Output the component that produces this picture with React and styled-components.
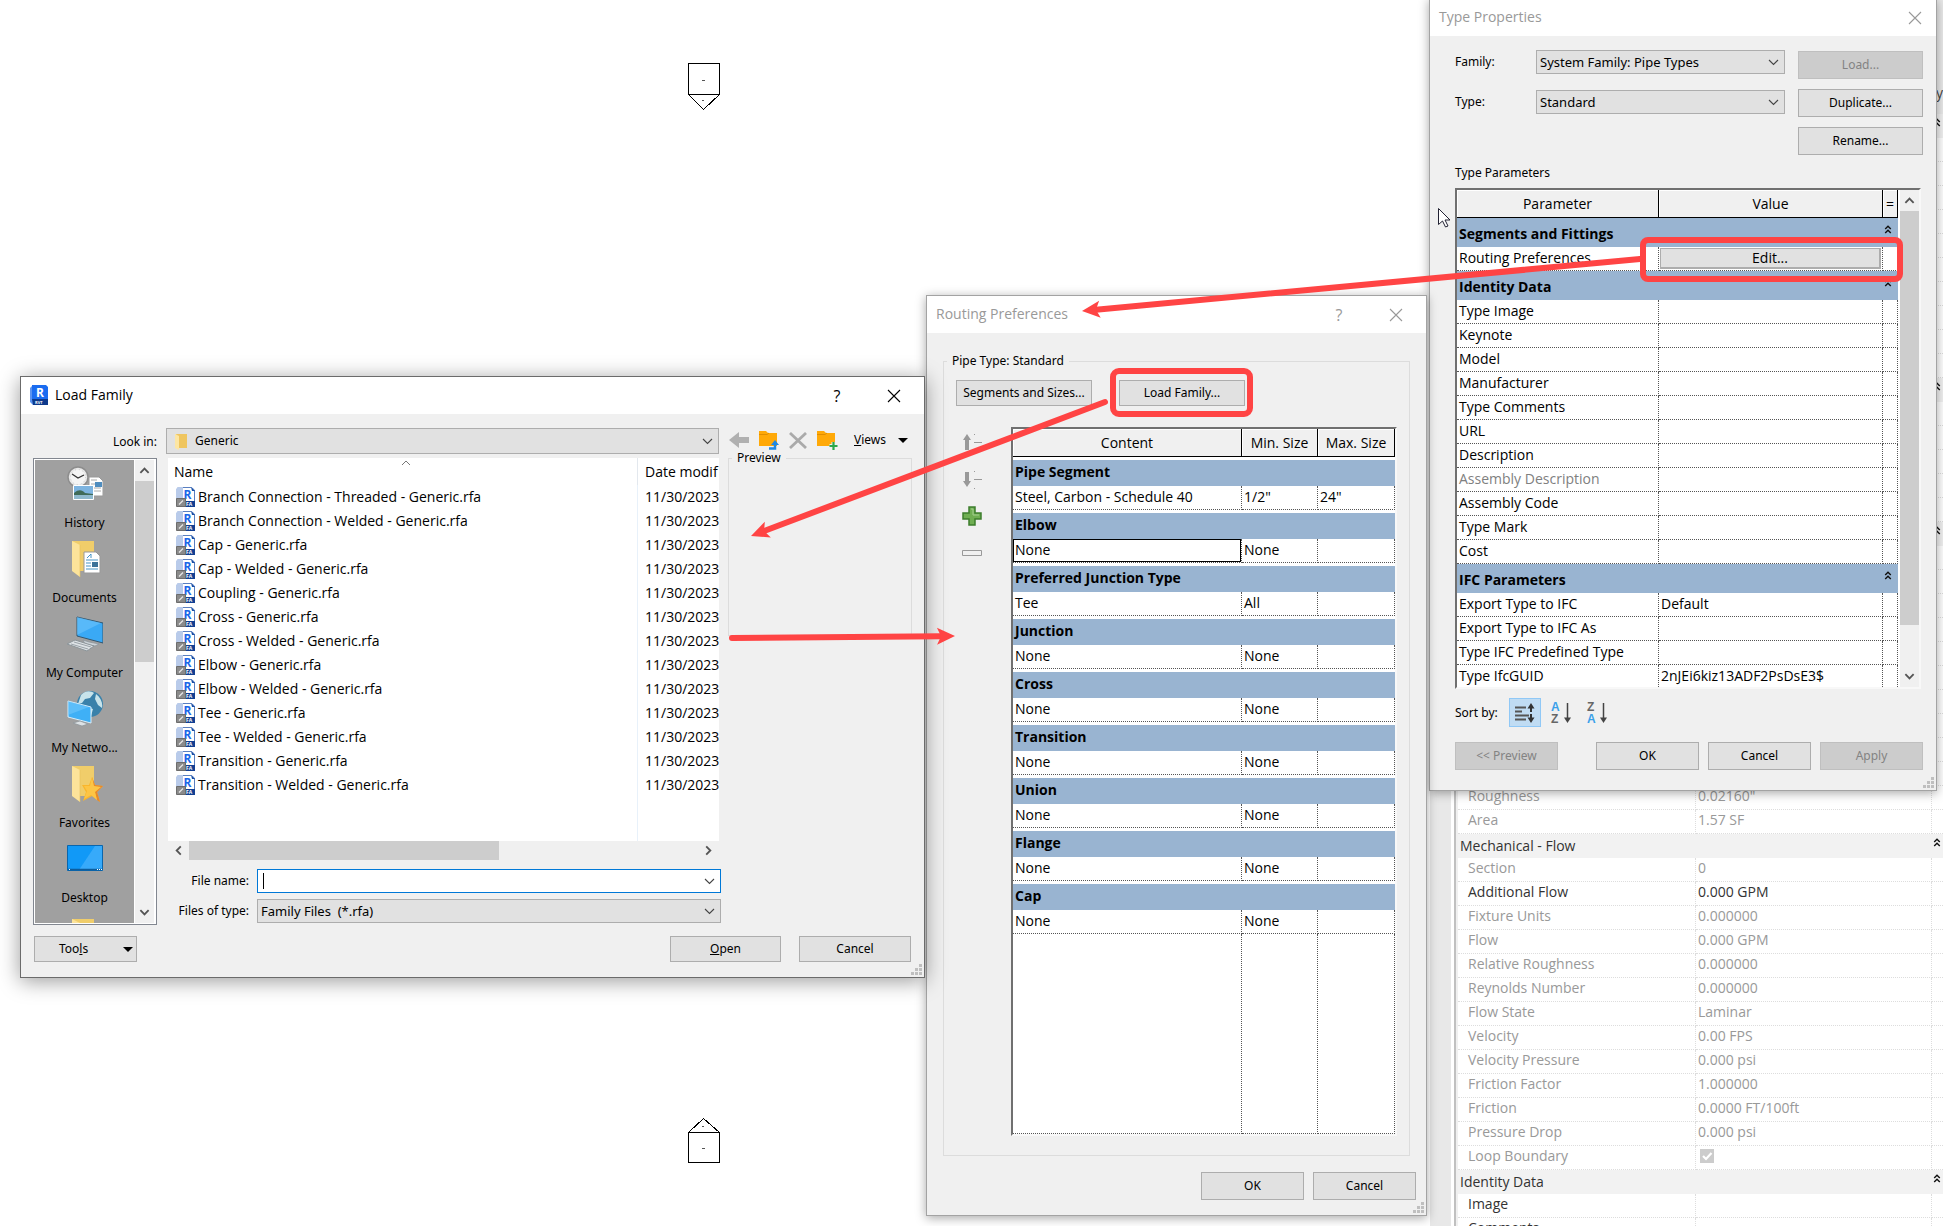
import React from "react";
import styled, { createGlobalStyle, css } from "styled-components";

const uiFont = `"Open Sans", "Noto Sans", sans-serif`;
const formFont = `"Noto Sans", "Open Sans", sans-serif`;

const GlobalStyle = createGlobalStyle`
  * {
    box-sizing: border-box;
  }

  body {
    margin: 0;
    background: #fff;
    color: #000;
    font: 14px/18px ${uiFont};
    overflow: hidden;
  }

  button, input, select {
    font: 12px/16px ${formFont};
    color: #000;
    margin: 0;
    padding: 0;
  }

  svg {
    display: block;
  }
`;

/* ---------- shared parts ---------- */

const Desktop = styled.div`
  position: relative;
  display: flex;
  height: 100vh;
  overflow: hidden;
`;

const Canvas = styled.main`
  flex: 1;
`;

const Window = styled.section`
  position: absolute;
  left: ${(p) => p.$x}px;
  top: ${(p) => p.$y}px;
  width: ${(p) => p.$w}px;
  background: #f0f0f0;
  border: 1px solid ${(p) => (p.$active ? "#6b6b6b" : "#a3a3a3")};
  box-shadow: ${(p) =>
    p.$active
      ? "0 3px 20px rgba(0, 0, 0, 0.4)"
      : "0 2px 10px rgba(0, 0, 0, 0.35)"};
`;

const TitleBar = styled.header`
  display: flex;
  align-items: center;
  gap: 6px;
  height: 37px;
  padding-left: 9px;
  background: #fff;
  color: ${(p) => (p.$active ? "#000" : "#999")};
`;

const Title = styled.h1`
  flex: 1;
  margin: 0;
  padding-bottom: 1px;
  font-size: 14px;
  font-weight: 400;
  line-height: 20px;
`;

const TitleActions = styled.div`
  display: flex;
`;

const TitleButton = styled.button`
  display: grid;
  place-items: center;
  width: ${(p) => p.$w}px;
  height: 36px;
  border: 0;
  background: transparent;
  color: inherit;
  font: 16px/20px ${uiFont};
`;

const Button = styled.button`
  width: ${(p) => p.$w}px;
  height: ${(p) => p.$h || 28}px;
  border: 1px solid #adadad;
  background: #e1e1e1;
  white-space: nowrap;

  &:disabled {
    border-color: #bfbfbf;
    background: #ccc;
    color: #838383;
  }
`;

const SelectBox = styled.div`
  display: grid;
  align-items: center;
  flex: 1;
  min-width: 0;
  height: ${(p) => p.$h || 24}px;
  border: 1px solid ${(p) => (p.$focus ? "#0078d7" : "#adadad")};
  background: ${(p) => (p.$focus ? "#fff" : "#e1e1e1")};

  > * {
    grid-area: 1 / 1;
  }

  > svg {
    pointer-events: none;
  }

  select,
  input {
    appearance: none;
    width: 100%;
    height: 100%;
    padding: 0 24px 0 ${(p) => p.$indent || 3}px;
    border: 0;
    outline: 0;
    border-radius: 0;
    background: transparent;
    font-size: ${(p) => (p.$indent ? 12 : 13)}px;
  }
`;

const DropIcon = styled.svg`
  justify-self: end;
  margin-right: 5px;
`;

const Caret = styled.span`
  width: 1px;
  height: 16px;
  margin-left: 5px;
  background: #000;
`;

const Group = styled.fieldset`
  min-width: 0;
  margin: 0;
  padding: 0 3px;
  border: 1px solid #dcdcdc;

  legend {
    padding: 0 5px;
    font: 12px/18px ${formFont};
  }
`;

const Grip = styled.svg`
  position: absolute;
  right: 2px;
  bottom: 2px;
`;

const ScrollBar = styled.div`
  display: flex;
  flex-direction: ${(p) => (p.$row ? "row" : "column")};
  flex: none;
  ${(p) => (p.$row ? "height" : "width")}: 19px;
  margin: ${(p) => (p.$row ? "0 2px" : "0")};
  background: #f0f0f0;
`;

const ScrollButton = styled.button`
  display: grid;
  place-items: center;
  flex: 0 0 21px;
  border: 0;
  background: transparent;
`;

const ScrollTrack = styled.div`
  display: flex;
  flex-direction: inherit;
  flex: 1;
`;

const ScrollThumb = styled.div`
  flex: 0 0 ${(p) => p.$size};
  background: #cdcdcd;
`;

const Sunken = styled.div`
  display: flex;
  flex: 1;
  border: 2px solid;
  border-color: #707070 #f8f8f8 #f8f8f8 #707070;
  background: #fff;
`;

const Grid = styled.table`
  width: 100%;
  table-layout: fixed;
  border-spacing: 0;
  line-height: 20px;

  th {
    height: 28px;
    padding: 0;
    border-right: 1px solid #000;
    border-bottom: 1px solid #000;
    background: #f0f0f0;
    box-shadow: inset 1px 1px #fff;
    font-weight: 400;
    text-align: center;
  }

  td {
    height: 24px;
    padding: 0 2px 2px;
    border-right: 1px dotted #555;
    border-bottom: 1px dotted #555;
    white-space: nowrap;
    overflow: hidden;
  }
`;

const MutedRow = styled.tr`
  color: ${(p) => (p.$muted ? "#808080" : "inherit")};
`;

const Chevron = ({ dir = "down", size = 11, width = 2 }) => {
  const turn = { down: 0, left: 90, up: 180, right: 270 }[dir];
  return (
    <svg width={size} height={size} viewBox="0 0 12 12" aria-hidden="true">
      <path
        d="M1.5 3.5 6 8l4.5-4.5"
        fill="none"
        stroke="#555"
        strokeWidth={width}
        transform={`rotate(${turn} 6 6)`}
      />
    </svg>
  );
};

const Drop = () => (
  <DropIcon width="11" height="7" viewBox="0 0 11 7" aria-hidden="true">
    <path d="M1 1l4.5 4.5L10 1" fill="none" stroke="#444" strokeWidth="1.1" />
  </DropIcon>
);

const CloseIcon = () => (
  <svg width="14" height="14" viewBox="0 0 14 14" aria-hidden="true">
    <path d="M1 1l12 12M13 1L1 13" stroke="currentColor" strokeWidth="1.1" />
  </svg>
);

const Collapse = () => (
  <svg width="8" height="9" viewBox="0 0 8 9" aria-hidden="true">
    <path
      d="M1.2 4 4 1.2 6.8 4M1.2 8 4 5.2 6.8 8"
      fill="none"
      stroke="#111"
      strokeWidth="1.4"
    />
  </svg>
);

const SizeGrip = () => (
  <Grip width="11" height="11" viewBox="0 0 11 11" aria-hidden="true">
    <path
      d="M8 0h3v3H8zM8 4h3v3H8zM8 8h3v3H8zM4 4h3v3H4zM4 8h3v3H4zM0 8h3v3H0z"
      fill="#bfbfbf"
    />
  </Grip>
);

/* ---------- properties palette ---------- */

const Palette = styled.aside`
  display: flex;
  width: 513px;
  background: #fff;
`;

const PaletteEdge = styled.div`
  width: 28px;
  border: solid #e8e8e8;
  border-width: 0 0 0 21px;
  padding-left: 3px;

  &::after {
    content: "";
    display: block;
    height: 100%;
    border-left: 2px solid #c0c0c0;
    background: #f0f0f0;
  }
`;

const PaletteBody = styled.div`
  flex: 1;
  min-width: 0;
`;

const PaletteTop = styled.div`
  height: 114px;
  padding-top: 84px;
  background: #eaeaea;
  color: #444;
  text-align: right;
`;

const PaletteTable = styled.table`
  width: 100%;
  table-layout: fixed;
  border-spacing: 0;
  line-height: 20px;
  color: #999;

  td {
    height: 24px;
    padding: 0 2px 3px;
    border-right: 1px dotted #ddd;
    border-bottom: 1px dotted #ddd;
  }

  td:first-child {
    padding-left: 10px;
  }

  td:last-child {
    border-right: 0;
  }
`;

const PaletteHead = styled.tr`
  th {
    height: 24px;
    padding: 0 2px 1px;
    background: #f2f2f2;
    color: #333;
    font-weight: 400;
    text-align: left;
  }

  svg {
    margin: -7px 0 0 -1px;
  }
`;

const PaletteRow = styled.tr`
  color: ${(p) => (p.$on ? "#333" : "inherit")};
`;

const CheckCell = styled.span`
  display: grid;
  width: 14px;
  height: 14px;
  margin-left: 2px;

  > * {
    grid-area: 1 / 1;
  }

  input {
    appearance: none;
    width: 14px;
    height: 14px;
    background: #ccc;
  }
`;

const blank = (n) => Array.from({ length: n }, () => ["", ""]);

const paletteGroups = [
  { name: "", rows: blank(10) },
  { name: "", rows: blank(5) },
  {
    name: "",
    rows: [...blank(10), ["Roughness", '0.02160"'], ["Area", "1.57 SF"]],
  },
  {
    name: "Mechanical - Flow",
    rows: [
      ["Section", "0"],
      ["Additional Flow", "0.000 GPM", true],
      ["Fixture Units", "0.000000"],
      ["Flow", "0.000 GPM"],
      ["Relative Roughness", "0.000000"],
      ["Reynolds Number", "0.000000"],
      ["Flow State", "Laminar"],
      ["Velocity", "0.00 FPS"],
      ["Velocity Pressure", "0.000 psi"],
      ["Friction Factor", "1.000000"],
      ["Friction", "0.0000 FT/100ft"],
      ["Pressure Drop", "0.000 psi"],
      ["Loop Boundary", "check"],
    ],
  },
  {
    name: "Identity Data",
    rows: [
      ["Image", "", true],
      ["Comments", "", true],
    ],
  },
];

const PropertiesPalette = () => (
  <Palette>
    <PaletteEdge />
    <PaletteBody>
      <PaletteTop>Apply</PaletteTop>
      <PaletteTable>
        <colgroup>
          <col style={{ width: 238 }} />
          <col />
          <col style={{ width: 11 }} />
        </colgroup>
        {paletteGroups.map((group, g) => (
          <tbody key={g}>
            <PaletteHead>
              <th colSpan={2}>{group.name}</th>
              <th>
                <Collapse />
              </th>
            </PaletteHead>
            {group.rows.map(([name, value, on], i) => (
              <PaletteRow key={i} $on={on}>
                <td>{name}</td>
                <td>
                  {value === "check" ? (
                    <CheckCell>
                      <input
                        type="checkbox"
                        aria-label={name}
                        defaultChecked
                        disabled
                      />
                      <svg width="14" height="14" viewBox="0 0 14 14">
                        <path
                          d="M3 7l3 3 5.500-6"
                          fill="none"
                          stroke="#fff"
                          strokeWidth="2.200"
                        />
                      </svg>
                    </CheckCell>
                  ) : (
                    value
                  )}
                </td>
                <td />
              </PaletteRow>
            ))}
          </tbody>
        ))}
      </PaletteTable>
    </PaletteBody>
  </Palette>
);

/* ---------- type properties ---------- */

const TypeBody = styled.div`
  padding: 14px 13px 20px 25px;
  font: 12px/18px ${formFont};
`;

const TypeForm = styled.div`
  display: flex;
  gap: 13px;
`;

const TypeFields = styled.div`
  flex: 1;
  display: flex;
  flex-direction: column;
  gap: 16px;
`;

const Field = styled.div`
  display: flex;
  align-items: center;

  label {
    width: ${(p) => p.$label}px;
    text-align: ${(p) => p.$align || "left"};
    margin-right: ${(p) => p.$gap || 0}px;
    font: 12px/18px ${formFont};
  }
`;

const Stack = styled.div`
  display: flex;
  flex-direction: column;
  gap: 10px;
  padding-top: 1px;
`;

const Caption = styled.div`
  padding: 9px 0 6px;
`;

const TypeFrame = styled(Sunken)`
  height: 501px;
  margin-right: 2px;
  font: 14px/18px ${uiFont};
  overflow: hidden;
`;

const TypeScroll = styled.div`
  flex: 1;
  margin-right: 2px;
  overflow: hidden;
`;

const Band = styled.tr`
  && td {
    height: 29px;
    padding: 2px 2px 0;
    border: 0;
    background: #99b4d1;
    font-weight: 700;
  }

  svg {
    margin: -9px 0 0 -1px;
  }
`;

const EditCell = styled.td`
  && {
    padding: 1px;
  }

  button {
    display: block;
    width: 100%;
    height: 21px;
    border: solid #adadad;
    border-width: 1px 2px 2px 1px;
    background: #e1e1e1;
    font: 14px/16px ${uiFont};
  }
`;

const SortRow = styled.div`
  display: flex;
  align-items: center;
  gap: 4px;
  margin-top: 9px;

  span {
    width: 50px;
  }
`;

const SortButton = styled.button`
  display: grid;
  place-items: center;
  width: 32px;
  height: 29px;
  border: 1px solid ${(p) => (p.$on ? "#90c8f6" : "transparent")};
  background: ${(p) => (p.$on ? "#c0dcf3" : "transparent")};

  svg {
    overflow: visible;
  }

  text {
    font: 700 12px "Liberation Sans", sans-serif;
  }
`;

const TypeFooter = styled.div`
  display: flex;
  gap: 9px;
  margin-top: 15px;

  button:first-child {
    margin-right: auto;
  }
`;

const typeGroups = [
  { name: "Segments and Fittings", rows: [["Routing Preferences", "edit"]] },
  {
    name: "Identity Data",
    rows: [
      ["Type Image"],
      ["Keynote"],
      ["Model"],
      ["Manufacturer"],
      ["Type Comments"],
      ["URL"],
      ["Description"],
      ["Assembly Description", "", true],
      ["Assembly Code"],
      ["Type Mark"],
      ["Cost"],
    ],
  },
  {
    name: "IFC Parameters",
    rows: [
      ["Export Type to IFC", "Default"],
      ["Export Type to IFC As"],
      ["Type IFC Predefined Type"],
      ["Type IfcGUID", "2nJEi6kiz13ADF2PsDsE3$"],
    ],
  },
];

const SortLetters = ({ top, bottom }) => (
  <svg width="20" height="22" viewBox="0 0 20 22" aria-hidden="true">
    <text x="0" y="9" fill={top === "A" ? "#3ba0ea" : "#666"}>
      {top}
    </text>
    <text x="0" y="21" fill={bottom === "A" ? "#3ba0ea" : "#666"}>
      {bottom}
    </text>
    <path d="M16.500 1v16" stroke="#444" strokeWidth="1.500" />
    <path d="M13 15.500h7L16.500 21z" fill="#444" />
  </svg>
);

const TypeProperties = () => (
  <Window $x={1429} $y={-2} $w={508}>
    <TitleBar>
      <Title>Type Properties</Title>
      <TitleButton $w={42} aria-label="Close">
        <CloseIcon />
      </TitleButton>
    </TitleBar>
    <TypeBody>
      <TypeForm>
        <TypeFields>
          <Field $label={81}>
            <label htmlFor="family">Family:</label>
            <SelectBox>
              <select id="family">
                <option>System Family: Pipe Types</option>
              </select>
              <Drop />
            </SelectBox>
          </Field>
          <Field $label={81}>
            <label htmlFor="type">Type:</label>
            <SelectBox>
              <select id="type">
                <option>Standard</option>
              </select>
              <Drop />
            </SelectBox>
          </Field>
        </TypeFields>
        <Stack>
          <Button $w={125} disabled>
            Load...
          </Button>
          <Button $w={125}>Duplicate...</Button>
          <Button $w={125}>Rename...</Button>
        </Stack>
      </TypeForm>
      <Caption>Type Parameters</Caption>
      <TypeFrame>
        <TypeScroll>
          <Grid>
            <colgroup>
              <col style={{ width: 202 }} />
              <col />
              <col style={{ width: 15 }} />
            </colgroup>
            <thead>
              <tr>
                <th>Parameter</th>
                <th>Value</th>
                <th>=</th>
              </tr>
            </thead>
            {typeGroups.map((group) => (
              <tbody key={group.name}>
                <Band>
                  <td colSpan={2}>{group.name}</td>
                  <td>
                    <Collapse />
                  </td>
                </Band>
                {group.rows.map(([name, value, muted]) => (
                  <MutedRow key={name} $muted={muted}>
                    <td>{name}</td>
                    {value === "edit" ? (
                      <EditCell>
                        <button>Edit...</button>
                      </EditCell>
                    ) : (
                      <td>{value}</td>
                    )}
                    <td />
                  </MutedRow>
                ))}
              </tbody>
            ))}
          </Grid>
        </TypeScroll>
        <ScrollBar>
          <ScrollButton aria-label="Scroll up">
            <Chevron dir="up" />
          </ScrollButton>
          <ScrollTrack>
            <ScrollThumb $size="91%" />
          </ScrollTrack>
          <ScrollButton aria-label="Scroll down">
            <Chevron />
          </ScrollButton>
        </ScrollBar>
      </TypeFrame>
      <SortRow>
        <span>Sort by:</span>
        <SortButton $on aria-label="Sort by group">
          <svg width="20" height="20" viewBox="0 0 20 20" aria-hidden="true">
            <path
              d="M0 4.500h11M0 8.500h7M0 12.500h14M0 16.500h11"
              stroke="#555"
              strokeWidth="1.800"
            />
            <path d="M16 5v4M16 11v4" stroke="#333" strokeWidth="2" />
            <path d="M12.500 5.500h7L16 0zM12.500 14.500h7L16 20z" fill="#333" />
          </svg>
        </SortButton>
        <SortButton aria-label="Sort ascending">
          <SortLetters top="A" bottom="Z" />
        </SortButton>
        <SortButton aria-label="Sort descending">
          <SortLetters top="Z" bottom="A" />
        </SortButton>
      </SortRow>
      <TypeFooter>
        <Button $w={103} disabled>
          &lt;&lt; Preview
        </Button>
        <Button $w={103}>OK</Button>
        <Button $w={103}>Cancel</Button>
        <Button $w={103} disabled>
          Apply
        </Button>
      </TypeFooter>
    </TypeBody>
    <SizeGrip />
  </Window>
);

/* ---------- routing preferences ---------- */

const RoutingBody = styled.div`
  padding: 19px 16px 15px;
`;

const RoutingButtons = styled.div`
  display: flex;
  gap: 27px;
  padding: 10px 9px 21px;
`;

const RoutingMain = styled.div`
  display: flex;
  padding: 0 9px 19px;
`;

const RowTools = styled.div`
  display: flex;
  flex-direction: column;
  gap: 17px;
  width: 55px;
  padding: 5px 0 0 6px;

  button {
    width: 20px;
    height: 20px;
    border: 0;
    background: transparent;
  }
`;

const GroupBand = styled.tr`
  && td {
    height: 29px;
    padding: 3px 0 0;
    border: 0;
    font-weight: 700;
  }

  div {
    height: 26px;
    padding: 2px;
    background: #99b4d1;
  }
`;

const ContentCell = styled.td`
  ${(p) =>
    p.$selected &&
    css`
      && {
        box-shadow: inset 0 0 0 1px #000;
      }
    `}
`;

const FillerRow = styled.tr`
  && td {
    height: 200px;
  }
`;

const RoutingFooter = styled.div`
  display: flex;
  justify-content: flex-end;
  gap: 9px;
  padding-top: 16px;
  margin-right: -6px;
`;

const routingRules = [
  ["Pipe Segment", "Steel, Carbon - Schedule 40", '1/2"', '24"'],
  ["Elbow", "None", "None", ""],
  ["Preferred Junction Type", "Tee", "All", ""],
  ["Junction", "None", "None", ""],
  ["Cross", "None", "None", ""],
  ["Transition", "None", "None", ""],
  ["Union", "None", "None", ""],
  ["Flange", "None", "None", ""],
  ["Cap", "None", "None", ""],
];

const MoveIcon = ({ down }) => (
  <svg width="20" height="20" viewBox="0 0 20 20" aria-hidden="true">
    <path
      d={down ? "M5 3v9" : "M5 18V8"}
      stroke="#999"
      strokeWidth="4"
    />
    <path d={down ? "M1 12h8l-4 6z" : "M1 8h8L5 2z"} fill="#999" />
    <path d="M12 10.500h8M12.500 2v1M12.500 19v1" stroke="#999" />
  </svg>
);

const RoutingPreferences = () => (
  <Window $x={926} $y={295} $w={501}>
    <TitleBar>
      <Title>Routing Preferences</Title>
      <TitleActions>
        <TitleButton $w={54} aria-label="Help">
          ?
        </TitleButton>
        <TitleButton $w={60} aria-label="Close">
          <CloseIcon />
        </TitleButton>
      </TitleActions>
    </TitleBar>
    <RoutingBody>
      <Group>
        <legend>Pipe Type: Standard</legend>
        <RoutingButtons>
          <Button $w={136} $h={26}>
            Segments and Sizes...
          </Button>
          <Button $w={126} $h={26}>
            Load Family...
          </Button>
        </RoutingButtons>
        <RoutingMain>
          <RowTools>
            <button aria-label="Move row up">
              <MoveIcon />
            </button>
            <button aria-label="Move row down">
              <MoveIcon down />
            </button>
            <button aria-label="Add row">
              <svg width="20" height="20" viewBox="0 0 20 20">
                <path
                  d="M7 1h6v6h6v6h-6v6H7v-6H1V7h6z"
                  fill="#6fae52"
                  stroke="#3d7d2c"
                  strokeWidth="1.500"
                />
                <path d="M9 3h2v6h6" fill="none" stroke="#a5cf90" />
              </svg>
            </button>
            <button aria-label="Remove row">
              <svg width="20" height="20" viewBox="0 0 20 20">
                <path
                  d="M.5 7.500h19v5H.5z"
                  fill="#f0f0f0"
                  stroke="#999"
                />
              </svg>
            </button>
          </RowTools>
          <Sunken>
            <Grid>
              <colgroup>
                <col style={{ width: 229 }} />
                <col />
                <col style={{ width: 77 }} />
              </colgroup>
              <thead>
                <tr>
                  <th>Content</th>
                  <th>Min. Size</th>
                  <th>Max. Size</th>
                </tr>
              </thead>
              <tbody>
                {routingRules.map(([group, content, min, max]) => (
                  <React.Fragment key={group}>
                    <GroupBand>
                      <td colSpan={3}>
                        <div>{group}</div>
                      </td>
                    </GroupBand>
                    <tr>
                      <ContentCell $selected={group === "Elbow"}>
                        {content}
                      </ContentCell>
                      <td>{min}</td>
                      <td>{max}</td>
                    </tr>
                  </React.Fragment>
                ))}
                <FillerRow>
                  <td />
                  <td />
                  <td />
                </FillerRow>
              </tbody>
            </Grid>
          </Sunken>
        </RoutingMain>
      </Group>
      <RoutingFooter>
        <Button $w={103}>OK</Button>
        <Button $w={103}>Cancel</Button>
      </RoutingFooter>
    </RoutingBody>
    <SizeGrip />
  </Window>
);

/* ---------- load family ---------- */

const LoadBody = styled.div`
  padding: 14px 12px 15px;
`;

const LoadColumns = styled.div`
  display: flex;
`;

const LeftColumn = styled.div`
  display: flex;
  flex-direction: column;
  width: 124px;
  margin-right: 9px;

  > label {
    height: 30px;
    font: 12px/28px ${formFont};
    text-align: right;
  }
`;

const CenterColumn = styled.div`
  display: flex;
  flex-direction: column;
  flex: 1;
  min-width: 0;
  margin-right: 7px;
`;

const RightColumn = styled.div`
  width: 184px;
`;

const LookIn = styled.div`
  display: flex;
  padding: 0 2px 4px 0;

  svg:first-child {
    margin-left: 8px;
  }
`;

const Places = styled.nav`
  display: flex;
  height: 467px;
  padding: 1px 2px 1px 1px;
  border: 1px solid #828790;
  background: #fff;
  overflow: hidden;
`;

const PlaceList = styled.div`
  flex: 1;
  margin-right: 1px;
  background: #a0a0a0;
  overflow: hidden;
`;

const Place = styled.button`
  display: flex;
  flex-direction: column;
  align-items: center;
  gap: 13px;
  width: 100%;
  height: 75px;
  padding-top: 6px;
  border: 0;
  background: transparent;
`;

const FileList = styled.div`
  height: 383px;
  margin: 0 2px;
  background: #fff;
  overflow: hidden;
`;

const FileTable = styled.table`
  width: 100%;
  table-layout: fixed;
  border-spacing: 0;
  line-height: 20px;

  th {
    height: 27px;
    padding: 0 0 0 6px;
    border-right: 1px solid #e3e8ee;
    font-weight: 400;
    text-align: left;
    white-space: nowrap;
    overflow: hidden;
  }

  td {
    height: 24px;
    padding: 0 0 0 8px;
    border-right: 1px solid #e8f1fa;
    white-space: nowrap;
    overflow: hidden;
  }

  th:last-child,
  td:last-child {
    padding-left: 7px;
    border-right: 0;
  }
`;

const FileSpace = styled.tr`
  td {
    height: 44px;
  }
`;

const NameHead = styled.div`
  display: grid;
  align-items: center;

  > * {
    grid-area: 1 / 1;
  }

  svg {
    align-self: start;
    justify-self: center;
    margin-top: -2px;
  }
`;

const FileName = styled.div`
  display: flex;
  align-items: center;
  gap: 3px;
`;

const LoadForm = styled.div`
  display: flex;
  flex-direction: column;
  gap: 6px;
  margin-top: 9px;
`;

const LoadTools = styled.div`
  display: flex;
  align-items: center;
  height: 21px;
  padding: 3px 0 0 1px;

  button {
    display: flex;
    align-items: center;
    gap: 12px;
    margin-right: 10px;
    border: 0;
    background: transparent;
  }

  button:last-child {
    margin: 0 0 0 6px;
  }
`;

const PreviewBox = styled.div`
  height: 168px;
`;

const LoadFooter = styled.div`
  display: flex;
  padding: 11px 1px 0 1px;
`;

const ToolsButton = styled(Button)`
  display: flex;
  align-items: center;
  justify-content: space-between;
  margin-right: auto;
  padding: 0 3px 0 24px;
`;

const ConfirmButtons = styled.div`
  display: flex;
  gap: 18px;
`;

const RevitIcon = () => (
  <svg width="19" height="21" viewBox="0 0 19 21" aria-hidden="true">
    <path d="M0 3l3-3v20l-3-3z" fill="#5b93f0" />
    <path d="M2 0h14l2 2v13H2z" fill="#1a6cf0" />
    <path d="M2 14h16v6H3z" fill="#0d3a8c" />
    <text x="6" y="11.500" fill="#fff" fontSize="12" fontWeight="700">
      R
    </text>
    <text x="5" y="19" fill="#fff" fontSize="4" fontWeight="700">
      RVT
    </text>
  </svg>
);

const RfaIcon = () => (
  <svg width="19" height="20" viewBox="0 0 19 20" aria-hidden="true">
    <path d="M2 .5h13.500L18.500 3v16H2z" fill="#fff" stroke="#5a7fc0" />
    <path d="M0 2l2-2h5v20H2l-2-2z" fill="#b9cbea" />
    <path d="M15 0l4 4h-3z" fill="#174ea6" />
    <path d="M7 14h12v6H7z" fill="#123f92" />
    <text x="7.500" y="11.500" fill="#1a66e8" fontSize="12" fontWeight="700">
      R
    </text>
    <text x="10" y="19" fill="#fff" fontSize="5" fontWeight="700">
      FA
    </text>
    <path d="M.5 11.500h9v8h-9z" fill="#8a8a8a" stroke="#6d6d6d" />
    <path d="M3 17.500l4-4" stroke="#e8e8e8" strokeWidth="1.200" />
  </svg>
);

const FolderArt = () => (
  <>
    <path d="M5 0h22v30H9z" fill="#f0cd6a" />
    <path d="M5 0l8 4v32l-8-6z" fill="#fce39a" />
    <path d="M13 4v32" stroke="#e6bf5a" strokeWidth="0.600" />
  </>
);

const placeArt = {
  History: (
    <>
      <circle cx="11" cy="11" r="10" fill="#e8e8e8" stroke="#8d8d8d" strokeWidth="1.500" />
      <circle cx="11" cy="11" r="7.500" fill="#f4f4f4" stroke="#c4c4c4" strokeWidth="0.800" strokeDasharray="1 3" />
      <path d="M5 8l6 4 6-3" fill="none" stroke="#333" strokeWidth="1.300" />
      <path d="M22 11h10l4 4v15H22z" fill="#fff" stroke="#999" />
      <path d="M24 14h6M24 18h4M24 22h10M24 25h10" stroke="#aaa" />
      <path d="M28 16h7v5h-7z" fill="#4f8dbf" />
      <path d="M6.500 19.500h20v14h-20z" fill="#7db4e0" stroke="#fff" />
      <path d="M7 27c5-4 8-3 11 0l8 1v5H7z" fill="#406b58" />
      <path d="M7 29h19v4H7z" fill="#8fb9cd" />
    </>
  ),
  Documents: (
    <>
      <FolderArt />
      <path d="M17 11h12l4 4v17H17z" fill="#fff" stroke="#999" />
      <path d="M20 17l4-4v4M19 19h12M19 22h5M19 25h5M19 28h12" fill="none" stroke="#4593c5" />
      <path d="M25 21h6v5h-6z" fill="#3b7299" />
    </>
  ),
  "My Computer": (
    <>
      <path d="M10 1l26 6v20l-26-7z" fill="#3aa9f5" stroke="#33566e" />
      <path d="M10 1l24 6-24 12z" fill="#6cc4fc" opacity="0.600" />
      <path d="M16 24l6 2 10 2-4 2-10-2z" fill="#ccd3d8" stroke="#8a949b" strokeWidth="0.700" />
      <path d="M0 28l8-4 19 6-7 5z" fill="#dde2e5" stroke="#8b9499" />
      <path d="M4 28l17 5M7 26l17 5" stroke="#9aa2a8" />
    </>
  ),
  "My Netwo...": (
    <>
      <circle cx="23" cy="13" r="13" fill="#3a81aa" />
      <path d="M14 4c5-5 10-4 13-2l-4 5-5 1-3 4-4 1zM29 3c5 4 7 9 6 14l-4-3-3-6zM20 16l6 2-2 7z" fill="#c8e3ea" />
      <path d="M1 10l23 6v16L1 26z" fill="#3fb0f6" stroke="#d7eefb" />
      <path d="M1 10l21 6L1 24z" fill="#7bcbfb" opacity="0.500" />
      <path d="M6 32l7-2 8 3-6 2z" fill="#dde2e5" stroke="#8b9499" strokeWidth="0.700" />
    </>
  ),
  Favorites: (
    <>
      <FolderArt />
      <path d="M25 11l3 8 8 1-6 6 3 10-8-6-9 5 3-9-4-7 7 0z" fill="#f9b62c" />
      <path d="M25 11l3 8 8 1-6 6 3 10-3-2-2-8-2-6z" fill="#e8882a" />
      <path d="M25 11l2 9 7 1-6 5 2 8-6-5-7 4 3-8-3-5 6 0z" fill="#fdc544" />
    </>
  ),
  Desktop: (
    <>
      <path d="M.5 4.500h35v25H.5z" fill="#1199f7" stroke="#0a66ad" />
      <path d="M12 29L28 5h7v24z" fill="#37aafa" />
      <path d="M1 28.500h34" stroke="#0d5d9c" strokeWidth="1.500" />
      <path d="M30 28.500h5M2 28.500h1" stroke="#fff" strokeDasharray="1 1" />
    </>
  ),
  "": (
    <g transform="translate(0 3)">
      <FolderArt />
    </g>
  ),
};

const files = [
  "Branch Connection - Threaded - Generic.rfa",
  "Branch Connection - Welded - Generic.rfa",
  "Cap - Generic.rfa",
  "Cap - Welded - Generic.rfa",
  "Coupling - Generic.rfa",
  "Cross - Generic.rfa",
  "Cross - Welded - Generic.rfa",
  "Elbow - Generic.rfa",
  "Elbow - Welded - Generic.rfa",
  "Tee - Generic.rfa",
  "Tee - Welded - Generic.rfa",
  "Transition - Generic.rfa",
  "Transition - Welded - Generic.rfa",
];

const Triangle = () => (
  <svg width="10" height="5" viewBox="0 0 10 5" aria-hidden="true">
    <path d="M0 0h10L5 5z" fill="#000" />
  </svg>
);

const LoadFamily = () => (
  <Window $x={20} $y={376} $w={905} $active>
    <TitleBar $active>
      <RevitIcon />
      <Title>Load Family</Title>
      <TitleActions>
        <TitleButton $w={54} aria-label="Help">
          ?
        </TitleButton>
        <TitleButton $w={60} aria-label="Close">
          <CloseIcon />
        </TitleButton>
      </TitleActions>
    </TitleBar>
    <LoadBody>
      <LoadColumns>
        <LeftColumn>
          <label htmlFor="look-in">Look in:</label>
          <Places>
            <PlaceList>
              {Object.keys(placeArt).map((name) => (
                <Place key={name} aria-label={name || "More"}>
                  <svg width="36" height="36" viewBox="0 0 36 36" aria-hidden="true">
                    {placeArt[name]}
                  </svg>
                  {name}
                </Place>
              ))}
            </PlaceList>
            <ScrollBar>
              <ScrollButton aria-label="Scroll up">
                <Chevron dir="up" />
              </ScrollButton>
              <ScrollTrack>
                <ScrollThumb $size="43%" />
              </ScrollTrack>
              <ScrollButton aria-label="Scroll down">
                <Chevron />
              </ScrollButton>
            </ScrollBar>
          </Places>
        </LeftColumn>

        <CenterColumn>
          <LookIn>
            <SelectBox $h={26} $indent={28}>
              <svg width="13" height="17" viewBox="0 0 13 17" aria-hidden="true">
                <path d="M1 1h11v14H4z" fill="#efc55f" />
                <path d="M0 1l4 2v14l-4-2z" fill="#fde6a3" />
              </svg>
              <select id="look-in">
                <option>Generic</option>
              </select>
              <Drop />
            </SelectBox>
          </LookIn>
          <FileList>
            <FileTable>
              <colgroup>
                <col style={{ width: 470 }} />
                <col />
              </colgroup>
              <thead>
                <tr>
                  <th>
                    <NameHead>
                      <span>Name</span>
                      <svg width="10" height="6" viewBox="0 0 10 6">
                        <path d="M1 5l4-4 4 4" fill="none" stroke="#777" />
                      </svg>
                    </NameHead>
                  </th>
                  <th>Date modif</th>
                </tr>
              </thead>
              <tbody>
                {files.map((file) => (
                  <tr key={file}>
                    <td>
                      <FileName>
                        <RfaIcon />
                        {file}
                      </FileName>
                    </td>
                    <td>11/30/2023</td>
                  </tr>
                ))}
                <FileSpace>
                  <td />
                  <td />
                </FileSpace>
              </tbody>
            </FileTable>
          </FileList>
          <ScrollBar $row>
            <ScrollButton aria-label="Scroll left">
              <Chevron dir="left" />
            </ScrollButton>
            <ScrollTrack>
              <ScrollThumb $size="61%" />
            </ScrollTrack>
            <ScrollButton aria-label="Scroll right">
              <Chevron dir="right" />
            </ScrollButton>
          </ScrollBar>
          <LoadForm>
            <Field $label={83} $align="right" $gap={8}>
              <label htmlFor="file-name">File name:</label>
              <SelectBox $focus>
                <input id="file-name" type="text" />
                <Caret />
                <Drop />
              </SelectBox>
            </Field>
            <Field $label={83} $align="right" $gap={8}>
              <label htmlFor="file-type">Files of type:</label>
              <SelectBox>
                <select id="file-type">
                  <option>Family Files&nbsp; (*.rfa)</option>
                </select>
                <Drop />
              </SelectBox>
            </Field>
          </LoadForm>
        </CenterColumn>

        <RightColumn>
          <LoadTools>
            <button aria-label="Back">
              <svg width="20" height="16" viewBox="0 0 20 16">
                <path d="M0 8l10-8v5h10v6H10v5z" fill="#b0b0b0" />
              </svg>
            </button>
            <button aria-label="Up one level">
              <svg width="20" height="20" viewBox="0 0 20 20">
                <path d="M0 1h7l2 2h9v13H0z" fill="#ffa908" />
                <path d="M0 4.500h8l2-1.500" fill="none" stroke="#e08e00" />
                <path d="M10 18.500h6v-5" fill="none" stroke="#1e88e5" strokeWidth="2.500" />
                <path d="M12 15l4-5 4 5z" fill="#1e88e5" />
              </svg>
            </button>
            <button aria-label="Delete">
              <svg width="18" height="17" viewBox="0 0 18 17">
                <path d="M1 1l16 15M17 1L1 16" stroke="#aaa" strokeWidth="2.800" />
              </svg>
            </button>
            <button aria-label="New folder">
              <svg width="21" height="20" viewBox="0 0 21 20">
                <path d="M0 1h7l2 2h9v13H0z" fill="#ffa908" />
                <path d="M0 4.500h8l2-1.500" fill="none" stroke="#e08e00" />
                <path d="M16.500 12v8M12.500 16h8" stroke="#f0f0f0" strokeWidth="4" />
                <path d="M16.500 12v8M12.500 16h8" stroke="#2aa84a" strokeWidth="2.200" />
              </svg>
            </button>
            <button>
              <span>
                <u>V</u>iews
              </span>
              <Triangle />
            </button>
          </LoadTools>
          <Group>
            <legend>Preview</legend>
            <PreviewBox />
          </Group>
        </RightColumn>
      </LoadColumns>
      <LoadFooter>
        <ToolsButton $w={103} $h={26}>
          <span>
            Too<u>l</u>s
          </span>
          <Triangle />
        </ToolsButton>
        <ConfirmButtons>
          <Button $w={111} $h={26}>
            <u>O</u>pen
          </Button>
          <Button $w={112} $h={26}>
            Cancel
          </Button>
        </ConfirmButtons>
      </LoadFooter>
    </LoadBody>
    <SizeGrip />
  </Window>
);

/* ---------- markers and callouts drawn over the desktop ---------- */

const Overlay = styled.svg`
  position: absolute;
  inset: 0;
  width: 100%;
  height: 100%;
  pointer-events: none;
`;

const Arrow = ({ from, to }) => {
  const [x1, y1] = from;
  const [x2, y2] = to;
  const len = Math.hypot(x2 - x1, y2 - y1);
  const angle = (Math.atan2(y2 - y1, x2 - x1) * 180) / Math.PI;
  return (
    <g transform={`translate(${x1} ${y1}) rotate(${angle})`}>
      <path
        d={`M0 0H${len - 14}`}
        stroke="#ff4444"
        strokeWidth="6"
        strokeLinecap="round"
      />
      <path
        d={`M${len} 0L${len - 18} -8.500L${len - 14} 0L${len - 18} 8.500z`}
        fill="#ff4444"
      />
    </g>
  );
};

const SectionMarks = () => (
  <Overlay aria-hidden="true">
    <g fill="none" stroke="#000" shapeRendering="crispEdges">
      <path d="M688.500 63.500h31v31h-31zM688.500 94.500l15 15 16-15" />
      <path d="M702 80.500h3M702 100.500h2" stroke="#555" />
      <path d="M688.500 1132.500h31v30h-31zM688.500 1132.500l15-14 16 14" />
      <path d="M702 1148.500h3M702 1126.500h2" stroke="#555" />
    </g>
  </Overlay>
);

const Callouts = () => (
  <Overlay aria-hidden="true">
    <g fill="none" stroke="#ff4444" strokeWidth="6">
      <rect x="1643" y="240" width="257" height="39" rx="5" />
      <rect x="1113" y="371" width="137" height="43" rx="6" />
    </g>
    <Arrow from={[1640, 259]} to={[1082, 311]} />
    <Arrow from={[1105, 402]} to={[751, 536]} />
    <Arrow from={[732, 638]} to={[955, 636]} />
    <path
      d="M1438.500 208.500v16l4-3.500 3 6 2.500-1-3-6h5z"
      fill="#fff"
      stroke="#223"
    />
  </Overlay>
);

const App = () => (
  <>
    <GlobalStyle />
    <Desktop>
      <Canvas>
        <SectionMarks />
      </Canvas>
      <PropertiesPalette />
      <TypeProperties />
      <RoutingPreferences />
      <LoadFamily />
      <Callouts />
    </Desktop>
  </>
);

export default App;
